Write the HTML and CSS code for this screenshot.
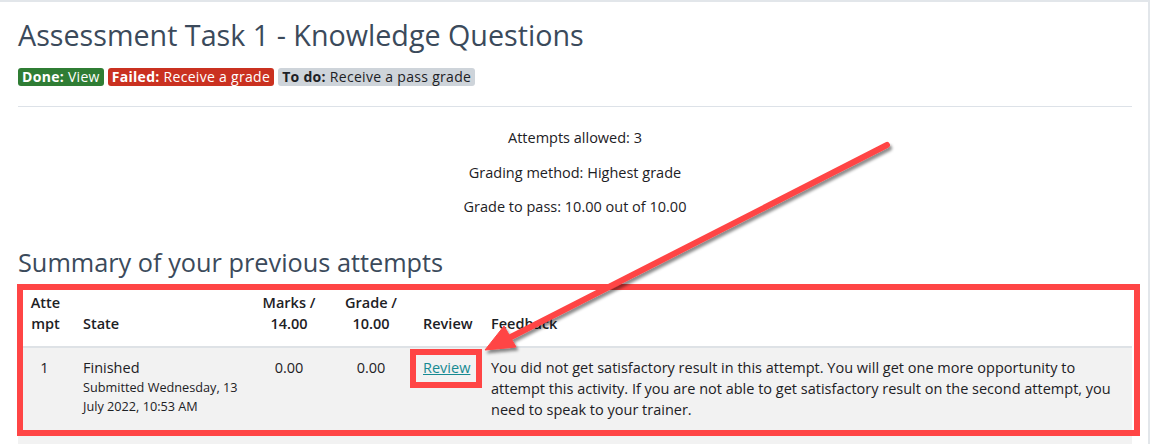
FILE: index.html
```html
<!DOCTYPE html>
<html lang="en">
<head>
  <meta charset="UTF-8">
  <title>Assessment Task 1 - Knowledge Questions</title>
  <link rel="stylesheet" href="styles.css">
</head>
<body>
  <div class="page">
    <h2 class="title">Assessment Task 1 - Knowledge Questions</h2>
    <div class="badges">
      <span class="badge done"><b>Done:</b> View</span>
      <span class="badge failed"><b>Failed:</b> Receive a grade</span>
      <span class="badge todo"><b>To do:</b> Receive a pass grade</span>
    </div>
    <hr>

    <div class="info">
      <p>Attempts allowed: 3</p>
      <p>Grading method: Highest grade</p>
      <p>Grade to pass: 10.00 out of 10.00</p>
    </div>

    <h3 class="subtitle">Summary of your previous attempts</h3>

    <div class="summary">
      <table class="attempts">
        <colgroup>
          <col style="width:53px">
          <col style="width:176px">
          <col style="width:84px">
          <col style="width:80px">
          <col style="width:68px">
          <col>
        </colgroup>
        <thead>
          <tr>
            <th class="c narrow">Attempt</th>
            <th>State</th>
            <th class="c">Marks / 14.00</th>
            <th class="c">Grade / 10.00</th>
            <th>Review</th>
            <th>Feedback</th>
          </tr>
        </thead>
        <tbody>
          <tr>
            <td class="c">1</td>
            <td>Finished<span class="when">Submitted Wednesday, 13 July 2022, 10:53 AM</span></td>
            <td class="c">0.00</td>
            <td class="c">0.00</td>
            <td><a href="#">Review</a></td>
            <td>You did not get satisfactory result in this attempt. You will get one more opportunity to attempt this activity. If you are not able to get satisfactory result on the second attempt, you need to speak to your trainer.</td>
          </tr>
        </tbody>
      </table>
      <div class="mark mark-table"></div>
      <div class="mark mark-review"></div>
    </div>
  </div>

  <svg class="arrow" width="1152" height="444" viewBox="0 0 1152 444">
    <defs>
      <filter id="shadow" x="-10%" y="-10%" width="130%" height="130%">
        <feDropShadow dx="2" dy="3" stdDeviation="1.6" flood-color="#000" flood-opacity="0.45"/>
      </filter>
    </defs>
    <g filter="url(#shadow)" fill="#ff4545" stroke="#ff4545">
      <line x1="887" y1="145" x2="505" y2="340" stroke-width="6" stroke-linecap="round"/>
      <polygon points="485,350 516,347 504,326" stroke-width="1" stroke-linejoin="round"/>
    </g>
  </svg>
</body>
</html>
```
FILE: styles.css
```css
body { margin: 0; background: #fff; font-family: "Open Sans", sans-serif; font-size: 14.5px; line-height: 21px; color: #1d2125; overflow: hidden; }
.page { width: 1150px; height: 444px; box-sizing: border-box; border-top: 2px solid #e2e6ea; border-right: 2px solid #e2e6ea; padding: 0 16px 0 18px; overflow: hidden; }
.title { margin: 16px 0 0; font-size: 28.7px; line-height: 34px; font-weight: 400; color: #3b4a5b; }
.badges { display: flex; gap: 4px; margin-top: 16px; }
.badge { font-size: 14px; letter-spacing: 0.3px; line-height: 18px; padding: 0 4px; border-radius: 3px; }
.badge b { font-weight: 700; }
.done { background: #2f7d34; color: #fff; }
.failed { background: #ca3120; color: #fff; }
.todo { background: #ced4da; color: #1d2125; }
hr { border: 0; border-top: 1px solid #dde2e8; margin: 20px 0 0; }
.info { text-align: center; padding-top: 20px; }
.info p { margin: 0 0 13.5px; }
.subtitle { margin: 30px 0 3px; font-size: 25.3px; line-height: 30px; font-weight: 400; color: #3b4a5b; }
.summary { position: relative; }
.attempts { width: 100%; table-layout: fixed; border-collapse: collapse; }
.attempts th, .attempts td { padding: 12px 6px 12px 12px; text-align: left; }
.attempts th { vertical-align: bottom; font-weight: 600; border-bottom: 2px solid #dee2e6; }
.attempts th.narrow { word-break: break-all; padding-right: 10px; }
.attempts td { vertical-align: top; background: #f2f2f2; padding-top: 9px; padding-bottom: 30px; }
.attempts .c { text-align: center; padding-left: 9px; padding-right: 9px; }
.attempts th.narrow.c { padding-left: 12px; padding-right: 10px; }
.when { display: block; font-size: 12.7px; line-height: 18.5px; }
.attempts a { color: #178a92; text-decoration: underline; }
.mark { position: absolute; border: 6px solid #ff4545; box-sizing: border-box; }
.mark-table { left: -1px; top: 4px; width: 1123px; height: 152px; }
.mark-review { left: 392px; top: 69px; width: 72px; height: 39px; }
.arrow { position: absolute; left: 0; top: 0; pointer-events: none; }
```
